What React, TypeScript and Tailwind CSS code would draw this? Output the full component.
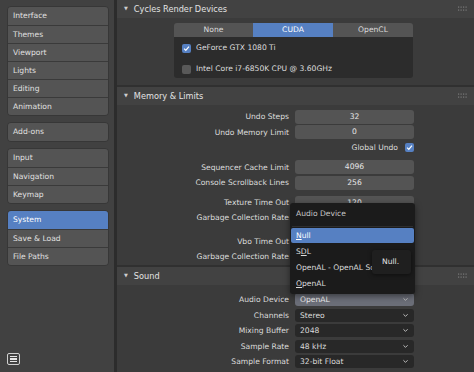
import React from 'react';

const font = { fontFamily: '"DejaVu Sans", "Liberation Sans", sans-serif' };

const navGroups = [
  ['Interface', 'Themes', 'Viewport', 'Lights', 'Editing', 'Animation'],
  ['Add-ons'],
  ['Input', 'Navigation', 'Keymap'],
  ['System', 'Save & Load', 'File Paths'],
];

const Grip = () => (
  <svg width="10" height="6" viewBox="0 0 10 6" className="ml-auto mr-[6px]">
    {[0, 2.5, 5, 7.5].map((x) =>
      [0.5, 3.5].map((y) => <rect key={`${x}-${y}`} x={x} y={y} width="1.2" height="1.2" fill="#7a7a7a" />)
    )}
  </svg>
);

const PanelHeader = ({ title }: { title: string }) => (
  <div className="h-[18px] bg-[#424242] flex items-center pl-[7px] text-[8.2px] text-[#e2e2e2]">
    <span className="text-[5px] mr-[6px] text-[#cfcfcf]">▼</span>
    <span>{title}</span>
    <Grip />
  </div>
);

const Check = ({ on }: { on: boolean }) => (
  <span
    className={`w-[9px] h-[9px] rounded-[2px] flex items-center justify-center ${on ? 'bg-[#5680c2]' : 'bg-[#595959]'}`}
  >
    {on && (
      <svg width="7" height="7" viewBox="0 0 8 8">
        <path d="M1.2 4.2 L3.2 6.1 L6.8 1.8" stroke="#ffffff" strokeWidth="1.4" fill="none" />
      </svg>
    )}
  </span>
);

const NumRow = ({ label, value }: { label: string; value: string }) => (
  <div className="flex items-center h-[16px]">
    <div className="w-[172px] text-right text-[7.6px] text-[#dcdcdc]">{label}</div>
    <div className="ml-[6px] w-[119px] h-[14px] rounded-[3px] bg-[#545454] text-center text-[7.6px] leading-[14px] text-[#e6e6e6]">
      {value}
    </div>
  </div>
);

const Chevron = () => (
  <svg width="7" height="5" viewBox="0 0 8 6" className="ml-auto mr-[5px]">
    <path d="M1.5 1.5 L4 4 L6.5 1.5" stroke="#bdbdbd" strokeWidth="1.2" fill="none" />
  </svg>
);

const SelectRow = ({ label, value, open }: { label: string; value: string; open?: boolean }) => (
  <div className="flex items-center h-[15.5px]">
    <div className="w-[172px] text-right text-[7.6px] text-[#dcdcdc]">{label}</div>
    <div
      className={`ml-[6px] w-[119px] h-[13px] rounded-[3px] flex items-center pl-[5px] text-[7.6px] ${open ? 'bg-[#6b6e78] text-[#f0f0f0]' : 'bg-[#282828] text-[#dcdcdc]'}`}
    >
      {value}
      <Chevron />
    </div>
  </div>
);

export default function App() {
  return (
    <div style={font} className="w-[474px] h-[372px] overflow-hidden bg-[#303030] flex select-none">
      {/* Sidebar */}
      <div className="w-[114px] h-full bg-[#414141] flex flex-col pt-[6px] pl-[7px]">
        {navGroups.map((group, gi) => (
          <div key={gi} className="w-[102px] mb-[6px] rounded-[4px] overflow-hidden border border-[#373737] flex flex-col">
            {group.map((item, i) => (
              <div
                key={item}
                className={`h-[18px] flex items-center pl-[5px] text-[7.6px] ${i > 0 ? 'border-t border-[#3a3a3a]' : ''} ${item === 'System' ? 'bg-[#5680c2] text-white' : 'bg-[#545454] text-[#e0e0e0]'}`}
              >
                {item}
              </div>
            ))}
          </div>
        ))}
        <div className="mt-auto mb-[7px] w-[13px] h-[12px] rounded-[2px] border border-[#cfcfcf] flex flex-col justify-around px-[2px] py-[1px]">
          <span className="h-[1.5px] bg-[#e6e6e6]" />
          <span className="h-[1.5px] bg-[#e6e6e6]" />
          <span className="h-[1.5px] bg-[#e6e6e6]" />
        </div>
      </div>
      <div className="w-[3px] h-full bg-[#2c2c2c]" />

      {/* Main */}
      <div className="flex-1 h-full flex flex-col gap-[2px] relative">
        {/* Cycles */}
        <div>
          <PanelHeader title="Cycles Render Devices" />
          <div className="bg-[#3b3b3b] h-[67px] pt-[5px] pl-[57px]">
            <div className="w-[239px] flex h-[14px] text-[7.6px] leading-[14px] text-center">
              <div className="w-[79px] bg-[#545454] rounded-tl-[3px] text-[#dcdcdc]">None</div>
              <div className="w-[80px] bg-[#5680c2] text-white">CUDA</div>
              <div className="w-[80px] bg-[#545454] rounded-tr-[3px] text-[#dcdcdc]">OpenCL</div>
            </div>
            <div className="w-[239px] h-[41px] bg-[#2c2c2c] rounded-b-[3px] flex flex-col pl-[8px] pt-[6px] gap-[11px] text-[7.6px] text-[#dcdcdc]">
              <div className="flex items-center gap-[5px] h-[10px]">
                <Check on />
                <span>GeForce GTX 1080 Ti</span>
              </div>
              <div className="flex items-center gap-[5px] h-[10px]">
                <Check on={false} />
                <span>Intel Core i7-6850K CPU @ 3.60GHz</span>
              </div>
            </div>
          </div>
        </div>

        {/* Memory & Limits */}
        <div>
          <PanelHeader title="Memory & Limits" />
          <div className="bg-[#3b3b3b] h-[160px] pt-[4px] flex flex-col">
            <NumRow label="Undo Steps" value="32" />
            <NumRow label="Undo Memory Limit" value="0" />
            <div className="flex items-center justify-end h-[16px] w-[297px] gap-[7px] text-[7.6px] text-[#dcdcdc]">
              <span>Global Undo</span>
              <Check on />
            </div>
            <div className="h-[4px]" />
            <NumRow label="Sequencer Cache Limit" value="4096" />
            <NumRow label="Console Scrollback Lines" value="256" />
            <div className="h-[4px]" />
            <NumRow label="Texture Time Out" value="120" />
            <NumRow label="Garbage Collection Rate" value="60" />
            <div className="h-[8px]" />
            <NumRow label="Vbo Time Out" value="130" />
            <NumRow label="Garbage Collection Rate" value="60" />
          </div>
        </div>

        {/* Sound */}
        <div className="flex-1 flex flex-col">
          <PanelHeader title="Sound" />
          <div className="bg-[#3b3b3b] flex-1 pt-[7px] flex flex-col">
            <SelectRow label="Audio Device" value="OpenAL" open />
            <SelectRow label="Channels" value="Stereo" />
            <SelectRow label="Mixing Buffer" value="2048" />
            <SelectRow label="Sample Rate" value="48 kHz" />
            <SelectRow label="Sample Format" value="32-bit Float" />
          </div>
        </div>

        {/* Dropdown popup */}
        <div className="absolute left-[173px] top-[203px] w-[125px] h-[91px] bg-[#1b1b1b] rounded-[3px] shadow-[0_2px_6px_rgba(0,0,0,0.5)] flex flex-col text-[7.6px] text-[#dcdcdc] pt-[3px]">
          <div className="h-[16px] pl-[6px] flex items-center text-[#c8c8c8]">Audio Device</div>
          <div className="h-[5px] border-b border-[#2e2e2e] mx-[2px]" />
          <div className="mt-[1px] mx-[1px] h-[15px] bg-[#5680c2] pl-[5px] flex items-center text-white rounded-[2px]">
            <span className="underline">N</span>ull
          </div>
          <div className="h-[17px] pl-[6px] flex items-center">
            S<span className="underline">D</span>L
          </div>
          <div className="h-[16px] pl-[6px] flex items-center">
            <span className="w-[78px] overflow-hidden whitespace-nowrap">
              OpenAL - OpenAL So<span className="underline">f</span>t
            </span>
          </div>
          <div className="h-[16px] pl-[6px] flex items-center">
            <span className="underline">O</span>penAL
          </div>
        </div>

        {/* Tooltip */}
        <div className="absolute left-[255px] top-[250px] w-[39px] h-[24px] bg-[#1f1f1f] rounded-[3px] shadow-[0_1px_4px_rgba(0,0,0,0.5)] flex items-center pl-[10px] text-[7.6px] text-[#e6e6e6]">
          Null.
        </div>
      </div>
    </div>
  );
}
